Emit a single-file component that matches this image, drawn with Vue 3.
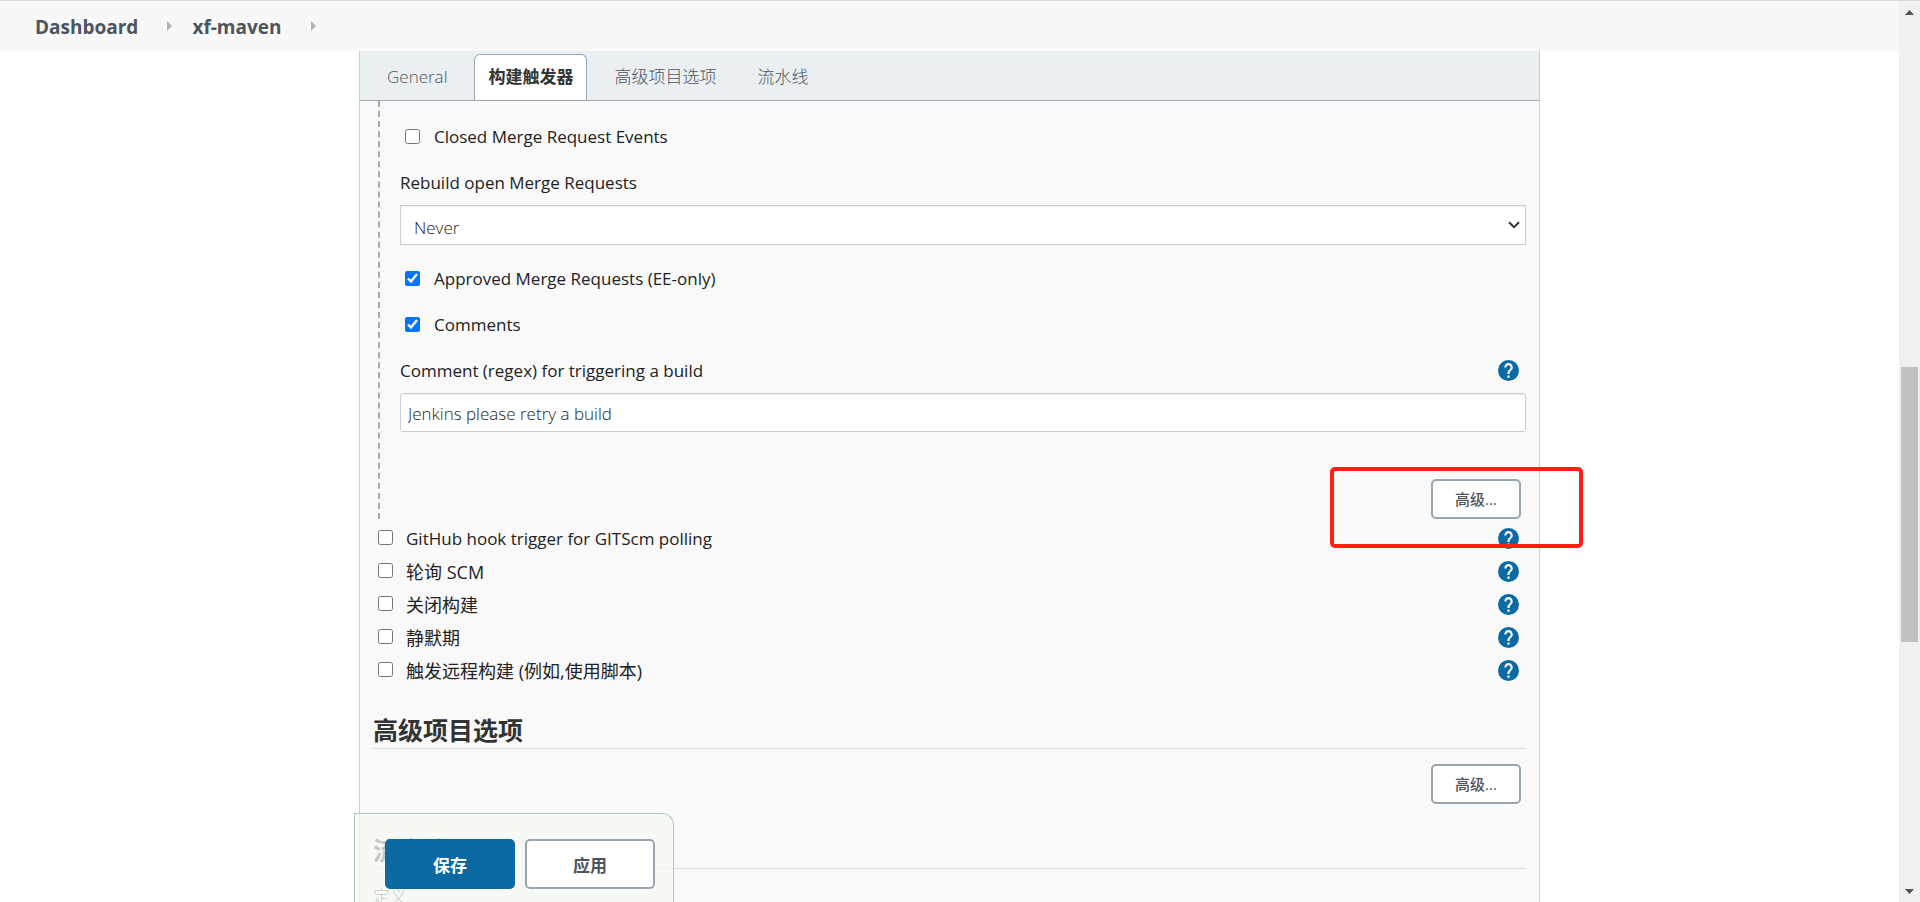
<template>
  <div class="app">
    <div class="view">
      <nav class="breadcrumbs">
        <template v-for="c in crumbs" :key="c">
          <a href="#">{{ c }}</a>
          <svg class="arrow" viewBox="0 0 5 10"><path d="M0 0 L5 5 L0 10 Z" fill="#b4b4b4" /></svg>
        </template>
      </nav>

      <main class="config">
        <div class="tabs">
          <a v-for="t in tabs" :key="t" href="#" class="tab" :class="{ active: t === activeTab }" @click.prevent="activeTab = t">{{ t }}</a>
        </div>

        <form class="body" @submit.prevent>
          <section class="nested">
            <div class="check-row">
              <input id="closed" v-model="closed" type="checkbox">
              <label for="closed">Closed Merge Request Events</label>
            </div>
            <div class="label-row"><label for="rebuild">Rebuild open Merge Requests</label></div>
            <div class="select-wrap">
              <select id="rebuild" v-model="rebuild">
                <option>Never</option>
                <option>On push to source branch</option>
                <option>On push to source or target branch</option>
              </select>
              <svg class="chevron" viewBox="0 0 12 8"><path d="M1 1.2 L6 6.2 L11 1.2" fill="none" stroke="#333" stroke-width="2" /></svg>
            </div>
            <div class="check-row after-field">
              <input id="approved" v-model="approved" type="checkbox">
              <label for="approved">Approved Merge Requests (EE-only)</label>
            </div>
            <div class="check-row">
              <input id="comments" v-model="comments" type="checkbox">
              <label for="comments">Comments</label>
            </div>
            <div class="label-row">
              <label for="regex">Comment (regex) for triggering a build</label>
              <button type="button" class="help" aria-label="Help">
                <svg viewBox="0 0 24 24"><path :d="helpPath" /></svg>
              </button>
            </div>
            <input id="regex" v-model="regex" class="text" type="text">
            <div class="advanced">
              <button type="button" class="btn small">高级...</button>
              <span class="highlight"></span>
            </div>
          </section>

          <div v-for="t in triggers" :key="t.id" class="trigger">
            <input :id="t.id" v-model="t.on" type="checkbox">
            <label :for="t.id" :class="{ zh: t.zh }">{{ t.label }}</label>
            <button type="button" class="help" aria-label="Help">
              <svg viewBox="0 0 24 24"><path :d="helpPath" /></svg>
            </button>
          </div>

          <h2>高级项目选项</h2>
          <div class="section-btn">
            <button type="button" class="btn small">高级...</button>
          </div>

          <h2>流水线</h2>
          <p class="definition">定义</p>

          <div class="sticky">
            <button type="submit" class="btn primary">保存</button>
            <button type="button" class="btn">应用</button>
          </div>
        </form>
      </main>
    </div>

    <div class="scrollbar">
      <svg viewBox="0 0 9 5"><path d="M0 5 L4.5 0 L9 5 Z" fill="#505050" /></svg>
      <div class="track"><div class="thumb"></div></div>
      <svg viewBox="0 0 9 5"><path d="M0 0 L9 0 L4.5 5 Z" fill="#505050" /></svg>
    </div>
  </div>
</template>

<script setup>
import { ref } from 'vue'

const crumbs = ['Dashboard', 'xf-maven']
const tabs = ['General', '构建触发器', '高级项目选项', '流水线']
const activeTab = ref('构建触发器')

const closed = ref(false)
const rebuild = ref('Never')
const approved = ref(true)
const comments = ref(true)
const regex = ref('Jenkins please retry a build')

const triggers = ref([
  { id: 'github', label: 'GitHub hook trigger for GITScm polling', on: false },
  { id: 'scm', label: '轮询 SCM', zh: true, on: false },
  { id: 'disable', label: '关闭构建', zh: true, on: false },
  { id: 'quiet', label: '静默期', zh: true, on: false },
  { id: 'remote', label: '触发远程构建 (例如,使用脚本)', zh: true, on: false }
])

const helpPath = 'M12 0a12 12 0 1 0 0 24a12 12 0 1 0 0-24zM13.3 20.4h-2.6v-2.6h2.6zM15.9 11.1l-1.1 1.1c-.9 1-1.5 1.7-1.5 3.7h-2.6v-.6c0-1.4.6-2.6 1.5-3.6l1.5-1.5c.5-.4.7-1 .7-1.7 0-1.4-1-2.5-2.4-2.5S9.6 7.1 9.6 8.5H7.2c0-2.8 2.1-5 4.8-5s4.9 2.2 4.9 5c0 1-.4 1.9-1 2.6z'
</script>

<style>
body { background: #fff; }
</style>

<style scoped>
* { box-sizing: border-box; }
.app { display: flex; height: 100vh; overflow: hidden; font-family: "Segoe UI", "Open Sans", "Noto Sans CJK SC", sans-serif; font-size: 17px; color: #333; }
.view { flex: 1; display: flex; flex-direction: column; min-width: 0; }

.breadcrumbs { display: flex; align-items: center; flex: none; height: 51px; padding-left: 35px; border-top: 1px solid #d9d9de; background: #f8f8f8; }
.breadcrumbs a { padding-top: 2px; color: #4d545d; font-size: 19px; font-weight: 700; text-decoration: none; }
.arrow { width: 5px; height: 10px; margin: 0 20px 0 29px; }

.config { flex: 1; display: flex; flex-direction: column; min-height: 0; width: 100%; max-width: 1181px; margin: 0 auto; border: solid #ccc; border-width: 0 1px; background: #f9f9f9; }
.tabs { display: flex; align-items: flex-end; gap: 13px; flex: none; height: 50px; padding-left: 13px; border-bottom: 1px solid #98a9b5; background: #eaeff2; }
.tab { height: 46px; padding: 0 13px; border: 1px solid transparent; border-bottom: 0; border-radius: 6px 6px 0 0; color: #4d545d; font-size: 17px; font-weight: 300; line-height: 44px; text-decoration: none; }
.tab.active { background: #fff; border-color: #98a9b5; color: #333; font-weight: 700; }

.body { position: relative; flex: 1; min-height: 0; padding: 0 13px; }
.nested { display: flex; flex-direction: column; height: 418px; margin-left: 5px; padding: 12px 0 0 20px; border-left: 2px dashed #aaa; }
.check-row, .label-row { display: flex; align-items: center; height: 46px; flex: none; }
.check-row { padding-left: 5px; }
label { color: #222; font-weight: 500; }
.check-row label { padding-left: 14px; }
input[type="checkbox"] { width: 15px; height: 15px; margin: 0; }
.label-row label { flex: 1; }
.after-field { margin-top: 10px; }

.select-wrap { position: relative; flex: none; }
select { display: block; width: 100%; height: 40px; padding: 4px 13px 0; border: 1px solid #ccc; border-radius: 0; appearance: none; background: #fff; box-shadow: inset 0 1px 1px rgba(0, 0, 0, 0.075); color: #222; font: inherit; font-weight: 300; }
.chevron { position: absolute; right: 6px; top: 16px; width: 12px; height: 8px; pointer-events: none; }
.text { height: 39px; padding: 2px 7px 0; border: 1px solid #ccc; border-radius: 3px; background: #fff; box-shadow: inset 0 1px 1px rgba(0, 0, 0, 0.075); color: #222; font: inherit; font-weight: 300; }

.help { display: block; width: 21px; height: 21px; margin-right: 7px; padding: 0; border: 0; background: none; cursor: pointer; }
.help svg { display: block; width: 21px; height: 21px; fill: #0b6aa2; }

.advanced { position: relative; display: flex; justify-content: flex-end; margin-top: auto; padding-right: 5px; }
.btn { width: 130px; height: 50px; padding: 0; border: 2px solid #98a6b1; border-radius: 5px; background: #fff; color: #4d545d; font-family: inherit; font-size: 17px; font-weight: 700; cursor: pointer; }
.btn.small { width: 90px; height: 40px; padding-bottom: 2px; font-size: 15px; font-weight: 500; }
.btn.primary { border-color: #0b6aa2; background: #0b6aa2; color: #fff; }
.highlight { position: absolute; top: -12px; right: -57px; z-index: 2; width: 253px; height: 81px; border: 4px solid #ff2010; border-radius: 5px; pointer-events: none; }

.trigger { display: flex; align-items: center; height: 33px; padding-left: 5px; }
.nested + .trigger { margin-top: 2px; }
.trigger label { flex: 1; padding: 2px 0 0 13px; }
.trigger .zh { padding-top: 0; font-size: 18px; font-weight: 400; }
.trigger .help { margin-top: 2px; }

h2 { height: 36px; margin: 27px 0 0; border-bottom: 1px solid #ddd; font-size: 25px; font-weight: 700; line-height: 34px; }
.section-btn { display: flex; justify-content: flex-end; padding: 15px 5px 2px 0; }
.definition { margin: 14px 0 0; font-weight: 300; }

.sticky { position: absolute; left: -6px; bottom: 0; display: flex; gap: 10px; width: 320px; height: 89px; padding: 25px 0 0 30px; border: solid #a9cbb8; border-width: 1px 1px 0; border-radius: 0 12px 0 0; background: rgba(245, 250, 241, 0.75); }

.scrollbar { display: flex; flex-direction: column; align-items: center; flex: none; width: 21px; padding: 9px 0 8px; border-top: 1px solid #d9d9de; background: #f0f0f0; }
.scrollbar svg { width: 9px; height: 5px; flex: none; }
.track { flex: 1; width: 17px; padding: 7px 0; display: flex; flex-direction: column; }
.track::before { content: ""; flex: 59; }
.track::after { content: ""; flex: 41; }
.thumb { flex: 0 0 32%; background: #c1c1c1; }
</style>
